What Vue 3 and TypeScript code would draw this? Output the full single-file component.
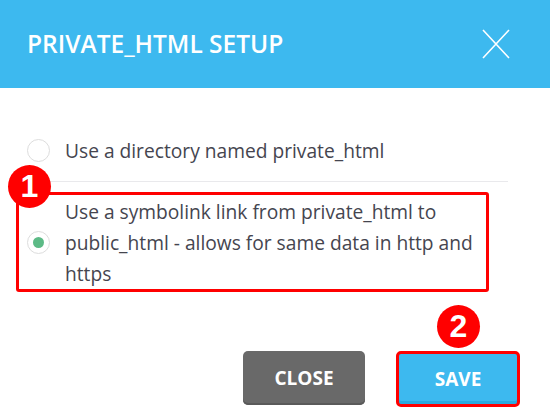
<script setup lang="ts">
interface Option { id: string; text: string; checked: boolean }
const options: Option[] = [
  { id: 'dir', text: 'Use a directory named private_html', checked: false },
  { id: 'link', text: 'Use a symbolink link from private_html to public_html - allows for same data in http and https', checked: true },
]
</script>

<template>
  <div class="dialog">
    <header class="head">
      <h1 class="title">PRIVATE_HTML SETUP</h1>
      <svg class="x" width="28" height="30" viewBox="0 0 28 30" fill="none" stroke="#fff" stroke-width="1.6">
        <path d="M1 1L27 29M27 1L1 29" />
      </svg>
    </header>
    <main class="body">
      <div class="opt first">
        <span class="radio"></span>
        <span class="label">{{ options[0].text }}</span>
      </div>
      <div class="rule"></div>
      <div class="opt second">
        <span class="badge b1">1</span>
        <span class="radio on"><i></i></span>
        <span class="label">{{ options[1].text }}</span>
      </div>
    </main>
    <footer class="foot">
      <button class="btn close">CLOSE</button>
      <button class="btn save"><span class="badge b2">2</span>SAVE</button>
    </footer>
  </div>
</template>

<style scoped>
.dialog { width: 550px; height: 419px; background: #fff; display: flex; flex-direction: column; font-family: "Open Sans", sans-serif; overflow: hidden; }
.head { height: 88px; background: #3db9ef; display: flex; align-items: center; justify-content: space-between; padding: 0 40px 0 27px; flex: none; box-sizing: border-box; }
.title { margin: 0 0 1px; font-size: 24.5px; font-weight: 600; color: #fff; }
.x { flex: none; }
.body { padding: 43px 61px 0 16px; }
.opt { display: flex; align-items: center; position: relative; }
.first { padding-left: 11px; height: 38px; }
.rule { height: 1px; background: #e9e9ec; margin: 12px 0 0 30px; width: 462px; }
.second { margin-top: 10px; width: 473px; height: 100px; box-sizing: border-box; border: 3px solid #f00; border-radius: 3px; padding: 1px 12px 0 8px; }
.radio { width: 23px; height: 23px; border-radius: 50%; border: 1px solid #ddd; box-sizing: border-box; flex: none; display: flex; align-items: center; justify-content: center; background: #fff; }
.radio i { width: 11px; height: 11px; border-radius: 50%; background: #5cba86; display: block; }
.label { margin-left: 15px; font-size: 19.2px; line-height: 31px; color: #45454f; font-weight: 500; }
.foot { display: flex; align-items: flex-start; padding: 59px 30px 0 243px; gap: 31px; }
.btn { border: 0; font-family: inherit; font-size: 19px; font-weight: 700; color: #fff; border-radius: 5px; position: relative; padding: 0; }
.close { width: 122px; height: 54px; background: #696969; box-shadow: inset 0 -2px 0 #5a5a5a; }
.save { width: 124px; height: 56px; background: #3db9ef; border: 3px solid #f00; box-shadow: inset 0 -3px 0 #2ba9df; }
.badge { position: absolute; width: 43px; height: 43px; border-radius: 50%; background: #f00; color: #fff; font-family: "Liberation Sans", sans-serif; font-weight: 700; font-size: 32px; display: flex; align-items: center; justify-content: center; }
.b1 { left: -11px; top: -30px; }
.b2 { left: 38px; top: -49px; }
</style>
